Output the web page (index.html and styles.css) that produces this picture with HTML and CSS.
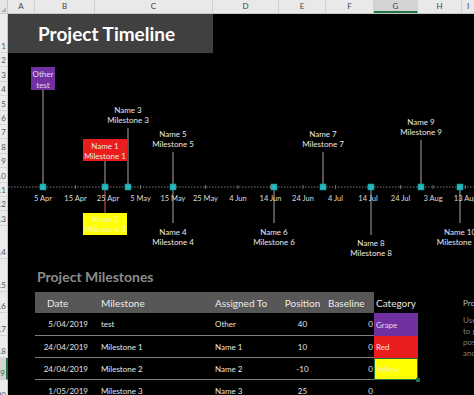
FILE: index.html
```html
<!DOCTYPE html>
<html lang="en">
<head>
  <meta charset="UTF-8" />
  <meta name="viewport" content="width=device-width, initial-scale=1.0"/>
  <title>Project Timeline</title>
  <link rel="stylesheet" href="styles.css">
</head>
<body>
  <div class="sheet">
    <div class="corner"></div>

    <div class="col-heads">
      <div class="col col-a">A</div>
      <div class="col col-b">B</div>
      <div class="col col-c">C</div>
      <div class="col col-d">D</div>
      <div class="col col-e">E</div>
      <div class="col col-f">F</div>
      <div class="col col-g is-active">G</div>
      <div class="col col-h">H</div>
      <div class="col col-i">I</div>
    </div>

    <div class="row-heads">
      <div class="rh rh-title">1</div>
      <div class="rh">2</div>
      <div class="rh">3</div>
      <div class="rh">4</div>
      <div class="rh">5</div>
      <div class="rh">6</div>
      <div class="rh">7</div>
      <div class="rh">8</div>
      <div class="rh">9</div>
      <div class="rh">10</div>
      <div class="rh">11</div>
      <div class="rh">12</div>
      <div class="rh">13</div>
      <div class="rh rh-tall">14</div>
      <div class="rh rh-tall">15</div>
      <div class="rh rh-head">16</div>
      <div class="rh rh-23">17</div>
      <div class="rh rh-22">18</div>
      <div class="rh rh-22 is-active">19</div>
      <div class="rh rh-22">20</div>
    </div>

    <div class="canvas">
      <div class="title-bar">Project Timeline</div>

      <svg class="chart" width="466" height="206" viewBox="8 53 466 206">
        <g class="stem">
          <line x1="43" y1="90" x2="43" y2="187"/>
          <line x1="105" y1="161" x2="105" y2="187"/>
          <line x1="128" y1="128" x2="128" y2="187"/>
          <line x1="173" y1="152" x2="173" y2="223"/>
          <line x1="274" y1="187" x2="274" y2="223"/>
          <line x1="323" y1="152" x2="323" y2="187"/>
          <line x1="371" y1="187" x2="371" y2="235"/>
          <line x1="421" y1="140" x2="421" y2="187"/>
          <line x1="460" y1="187" x2="460" y2="223"/>
        </g>
        <line class="stem-red" x1="105" y1="187" x2="105" y2="213"/>

        <line class="axis" x1="8" y1="187" x2="474" y2="187"/>
        <g class="ticks">
          <line x1="43" y1="185" x2="43" y2="189"/>
          <line x1="75.5" y1="185" x2="75.5" y2="189"/>
          <line x1="108" y1="185" x2="108" y2="189"/>
          <line x1="140.5" y1="185" x2="140.5" y2="189"/>
          <line x1="173" y1="185" x2="173" y2="189"/>
          <line x1="205.5" y1="185" x2="205.5" y2="189"/>
          <line x1="238" y1="185" x2="238" y2="189"/>
          <line x1="270.5" y1="185" x2="270.5" y2="189"/>
          <line x1="303" y1="185" x2="303" y2="189"/>
          <line x1="335.5" y1="185" x2="335.5" y2="189"/>
          <line x1="368" y1="185" x2="368" y2="189"/>
          <line x1="400.5" y1="185" x2="400.5" y2="189"/>
          <line x1="433" y1="185" x2="433" y2="189"/>
          <line x1="465.5" y1="185" x2="465.5" y2="189"/>
        </g>

        <g class="markers">
          <rect x="40" y="184" width="6" height="6"/>
          <rect x="102" y="184" width="6" height="6"/>
          <rect x="125" y="184" width="6" height="6"/>
          <rect x="170" y="184" width="6" height="6"/>
          <rect x="271" y="184" width="6" height="6"/>
          <rect x="320" y="184" width="6" height="6"/>
          <rect x="368" y="184" width="6" height="6"/>
          <rect x="418" y="184" width="6" height="6"/>
          <rect x="457" y="184" width="6" height="6"/>
        </g>

        <g class="axis-labels">
          <text x="43" y="201">5 Apr</text>
          <text x="75.5" y="201">15 Apr</text>
          <text x="108" y="201">25 Apr</text>
          <text x="140.5" y="201">5 May</text>
          <text x="173" y="201">15 May</text>
          <text x="205.5" y="201">25 May</text>
          <text x="238" y="201">4 Jun</text>
          <text x="270.5" y="201">14 Jun</text>
          <text x="303" y="201">24 Jun</text>
          <text x="335.5" y="201">4 Jul</text>
          <text x="368" y="201">14 Jul</text>
          <text x="400.5" y="201">24 Jul</text>
          <text x="433" y="201">3 Aug</text>
          <text x="465.5" y="201">13 Aug</text>
        </g>

        <rect class="box-grape" x="31" y="67" width="24" height="23"/>
        <text class="on-grape" x="43" y="77">Other</text>
        <text class="on-grape" x="43" y="87.5">test</text>

        <rect class="box-red" x="83" y="139" width="44" height="22"/>
        <text x="105" y="148.5">Name 1</text>
        <text x="105" y="158.5">Milestone 1</text>

        <rect class="box-yellow" x="83" y="213" width="44" height="22"/>
        <text class="on-yellow" x="105" y="222">Name 2</text>
        <text class="on-yellow" x="105" y="232">Milestone 2</text>

        <text x="128" y="113">Name 3</text>
        <text x="128" y="123">Milestone 3</text>

        <text x="173" y="137">Name 5</text>
        <text x="173" y="147">Milestone 5</text>

        <text x="173" y="235">Name 4</text>
        <text x="173" y="245">Milestone 4</text>

        <text x="274" y="235">Name 6</text>
        <text x="274" y="245">Milestone 6</text>

        <text x="323" y="137">Name 7</text>
        <text x="323" y="147">Milestone 7</text>

        <text x="371" y="246">Name 8</text>
        <text x="371" y="256">Milestone 8</text>

        <text x="421" y="125">Name 9</text>
        <text x="421" y="135">Milestone 9</text>

        <text x="460" y="235">Name 10</text>
        <text x="460" y="245">Milestone 10</text>
      </svg>

      <div class="lower">
        <div class="milestones">
          <h2>Project Milestones</h2>
          <div class="table">
            <div class="th c-date">Date</div>
            <div class="th c-name">Milestone</div>
            <div class="th c-who">Assigned To</div>
            <div class="th c-pos">Position</div>
            <div class="th c-base">Baseline</div>
            <div class="th c-cat">Category</div>

            <div class="td c-date">5/04/2019</div>
            <div class="td c-name">test</div>
            <div class="td c-who">Other</div>
            <div class="td c-pos">40</div>
            <div class="td c-base">0</div>
            <div class="td c-cat cat-grape">Grape</div>

            <div class="td c-date">24/04/2019</div>
            <div class="td c-name">Milestone 1</div>
            <div class="td c-who">Name 1</div>
            <div class="td c-pos">10</div>
            <div class="td c-base">0</div>
            <div class="td c-cat cat-red">Red</div>

            <div class="td c-date">24/04/2019</div>
            <div class="td c-name">Milestone 2</div>
            <div class="td c-who">Name 2</div>
            <div class="td c-pos">-10</div>
            <div class="td c-base">0</div>
            <div class="td c-cat cat-yellow is-selected">Yellow</div>

            <div class="td c-date">1/05/2019</div>
            <div class="td c-name">Milestone 3</div>
            <div class="td c-who">Name 3</div>
            <div class="td c-pos">25</div>
            <div class="td c-base">0</div>
            <div class="td c-cat"></div>
          </div>
        </div>

        <div class="notes">
          <h3>Project Timeline Notes</h3>
          <p>Use the Position column</p>
          <p>to place each label above or</p>
          <p>position it below the line,</p>
          <p>and pick a Category colour.</p>
        </div>
      </div>
    </div>
  </div>
</body>
</html>
```

FILE: styles.css
```css
html, body {
  margin: 0;
  height: 100%;
  overflow: hidden;
}

body {
  font-family: Lato, "Open Sans", sans-serif;
  background: #000;
}

.sheet {
  display: grid;
  grid-template-columns: 8px 1fr;
  grid-template-rows: 14px 1fr;
  width: 474px;
  height: 395px;
}

/* headers */
.corner {
  position: relative;
  background: #e6e6e6;
  border-right: 1px solid #c8c8c8;
  border-bottom: 1px solid #c8c8c8;
  box-sizing: border-box;
}

.corner::after {
  content: "";
  position: absolute;
  right: 1px;
  bottom: 1px;
  border-left: 5px solid transparent;
  border-bottom: 5px solid #b5b5b5;
}

.col-heads {
  display: flex;
  background: #e9e9e9;
  border-bottom: 1px solid #c8c8c8;
  box-sizing: border-box;
  overflow: hidden;
}

.col {
  flex: none;
  box-sizing: border-box;
  border-right: 1px solid #d0d0d0;
  font-size: 8px;
  line-height: 13px;
  color: #444;
  text-align: center;
}

.col-a { width: 27px; }
.col-b { width: 60px; }
.col-c { width: 118px; }
.col-d { width: 66px; }
.col-e { width: 47px; }
.col-f { width: 48px; }
.col-g { width: 44px; }
.col-h { width: 44px; }
.col-i { flex: 1; border-right: none; }

.col.is-active {
  background: #d4d4d4;
  border-bottom: 2px solid #217346;
}

.row-heads {
  display: flex;
  flex-direction: column;
  background: #ececec;
  overflow: hidden;
}

.rh {
  flex: none;
  height: 14.4px;
  display: flex;
  align-items: flex-end;
  justify-content: flex-end;
  box-sizing: border-box;
  padding: 0 1px 2px 0;
  border-right: 1px solid #c8c8c8;
  border-bottom: 1px solid #d4d4d4;
  font-size: 8px;
  line-height: 8px;
  color: #555;
  white-space: nowrap;
  overflow: hidden;
}

.rh-title { height: 39px; }
.rh-tall { height: 33px; }
.rh-head { height: 21px; }
.rh-23 { height: 23px; }
.rh-22 { height: 22px; }

.rh.is-active {
  background: #d4d4d4;
  color: #217346;
  border-right: 2px solid #217346;
}

/* sheet body */
.canvas {
  background: #000;
  overflow: hidden;
}

.title-bar {
  width: 205px;
  height: 39px;
  box-sizing: border-box;
  padding-left: 30px;
  background: #404040;
  color: #fff;
  font-size: 19px;
  font-weight: 700;
  line-height: 39px;
}

.chart {
  display: block;
}

.chart .stem line {
  stroke: #8c8c8c;
  stroke-width: 1.2;
}

.chart .stem-red {
  stroke: #c04848;
  stroke-width: 1.2;
}

.chart .axis {
  stroke: #7a7a7a;
  stroke-width: 1;
  stroke-dasharray: 1.5 1.5;
}

.chart .ticks line {
  stroke: #6e6e6e;
  stroke-width: 1;
}

.chart .markers rect {
  fill: #25b9bd;
  stroke: #178a8d;
  stroke-width: 0.6;
}

.chart text {
  font-family: Lato, "Open Sans", sans-serif;
  font-size: 8px;
  fill: #e8e8e8;
  text-anchor: middle;
}

.chart .axis-labels text {
  font-size: 7.5px;
  fill: #dcdcdc;
}

.chart .box-grape { fill: #7030a0; }
.chart .box-red { fill: #ea1c1c; }
.chart .box-yellow { fill: #ffff00; }
.chart .on-grape { fill: #e6d8f4; }
.chart .on-yellow { fill: #f6f6b8; }

/* milestone table */
.lower {
  display: flex;
  align-items: flex-start;
}

.milestones {
  flex: none;
  margin-left: 27px;
}

.milestones h2 {
  margin: 0;
  padding: 8px 0 5px 2px;
  font-size: 14px;
  line-height: 20px;
  font-weight: 700;
  color: #8c8c8c;
}

.table {
  display: grid;
  grid-template-columns: 60px 118px 66px 47px 48px 44px;
  grid-template-rows: 21px 23px 22px 22px 22px;
  font-size: 8px;
  color: #e4e4e4;
}

.th {
  display: flex;
  align-items: center;
  background: #575757;
  font-size: 10px;
  color: #ececec;
  white-space: nowrap;
}

.td {
  display: flex;
  align-items: center;
  box-sizing: border-box;
  border-bottom: 1px solid #808080;
  white-space: nowrap;
}

.th.c-date { padding-left: 12px; }
.td.c-date { justify-content: flex-end; padding-right: 7px; }
.c-name { padding-left: 6px; }
.c-who { padding-left: 2px; }
.c-pos { justify-content: center; }
.th.c-base { padding-left: 2px; }
.td.c-base { justify-content: flex-end; padding-right: 1px; }
.c-cat { padding-left: 2px; }

.th.c-cat {
  background: none;
  color: #e4e4e4;
}

.td.c-cat { border-bottom: none; }

.cat-grape { background: #7030a0; color: #e6d8f4; }
.cat-red { background: #ea1c1c; color: #ffe0e0; }
.cat-yellow { background: #ffff00; color: #f6f6b8; }

.is-selected {
  position: relative;
  box-shadow: inset 0 0 0 1px #217346;
}

.is-selected::after {
  content: "";
  position: absolute;
  right: -2px;
  bottom: -2px;
  width: 4px;
  height: 4px;
  background: #217346;
}

/* side notes, cut off by the window */
.notes {
  flex: none;
  margin: 39px 0 0 45px;
  white-space: nowrap;
  font-size: 8px;
  line-height: 11px;
  color: #7f7f7f;
}

.notes h3 {
  margin: 0 0 6px;
  font-size: 8px;
  font-weight: 400;
  line-height: 11px;
  color: #bdbdbd;
}

.notes p {
  margin: 0;
}
```
